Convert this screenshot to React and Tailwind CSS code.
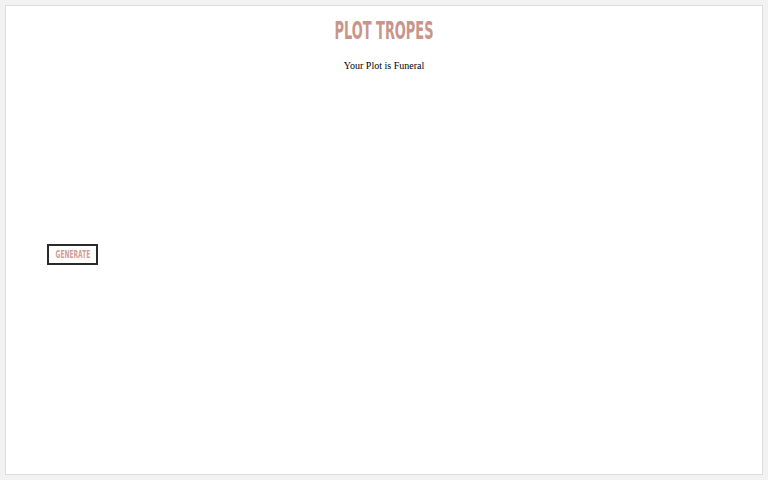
import React, { useState } from 'react';

const tropes = ['Funeral', 'Heist', 'Love Triangle', 'Road Trip', 'Chosen One'];

const condensed = { fontFamily: '"DejaVu Sans Condensed", "DejaVu Sans", sans-serif' };

const App = () => {
  const [trope, setTrope] = useState('Funeral');

  const generate = () => {
    setTrope(tropes[Math.floor(Math.random() * tropes.length)]);
  };

  return (
    <div className="w-full h-screen bg-[#f2f2f2] p-[5px]">
      <div className="h-full bg-white border border-[#dcdcdc] flex flex-col">
        <h1
          className="text-center text-[#c9958a] font-bold uppercase text-[24px] leading-none mt-[13px] scale-x-[0.6] origin-center"
          style={condensed}
        >
          Plot Tropes
        </h1>
        <p className="text-center text-[10px] text-black mt-[15px]" style={{ fontFamily: '"Liberation Serif", serif' }}>
          Your Plot is {trope}
        </p>
        <div className="mt-[171px] pl-[41px]">
          <button
            onClick={generate}
            className="border-2 border-[#2a2a2a] w-[51px] h-[21px] flex items-center justify-center"
          >
            <span
              className="inline-block text-[11px] uppercase text-[#d09e9a] font-bold leading-none scale-x-[0.6] whitespace-nowrap"
              style={condensed}
            >
              Generate
            </span>
          </button>
        </div>
      </div>
    </div>
  );
};

export default App;
